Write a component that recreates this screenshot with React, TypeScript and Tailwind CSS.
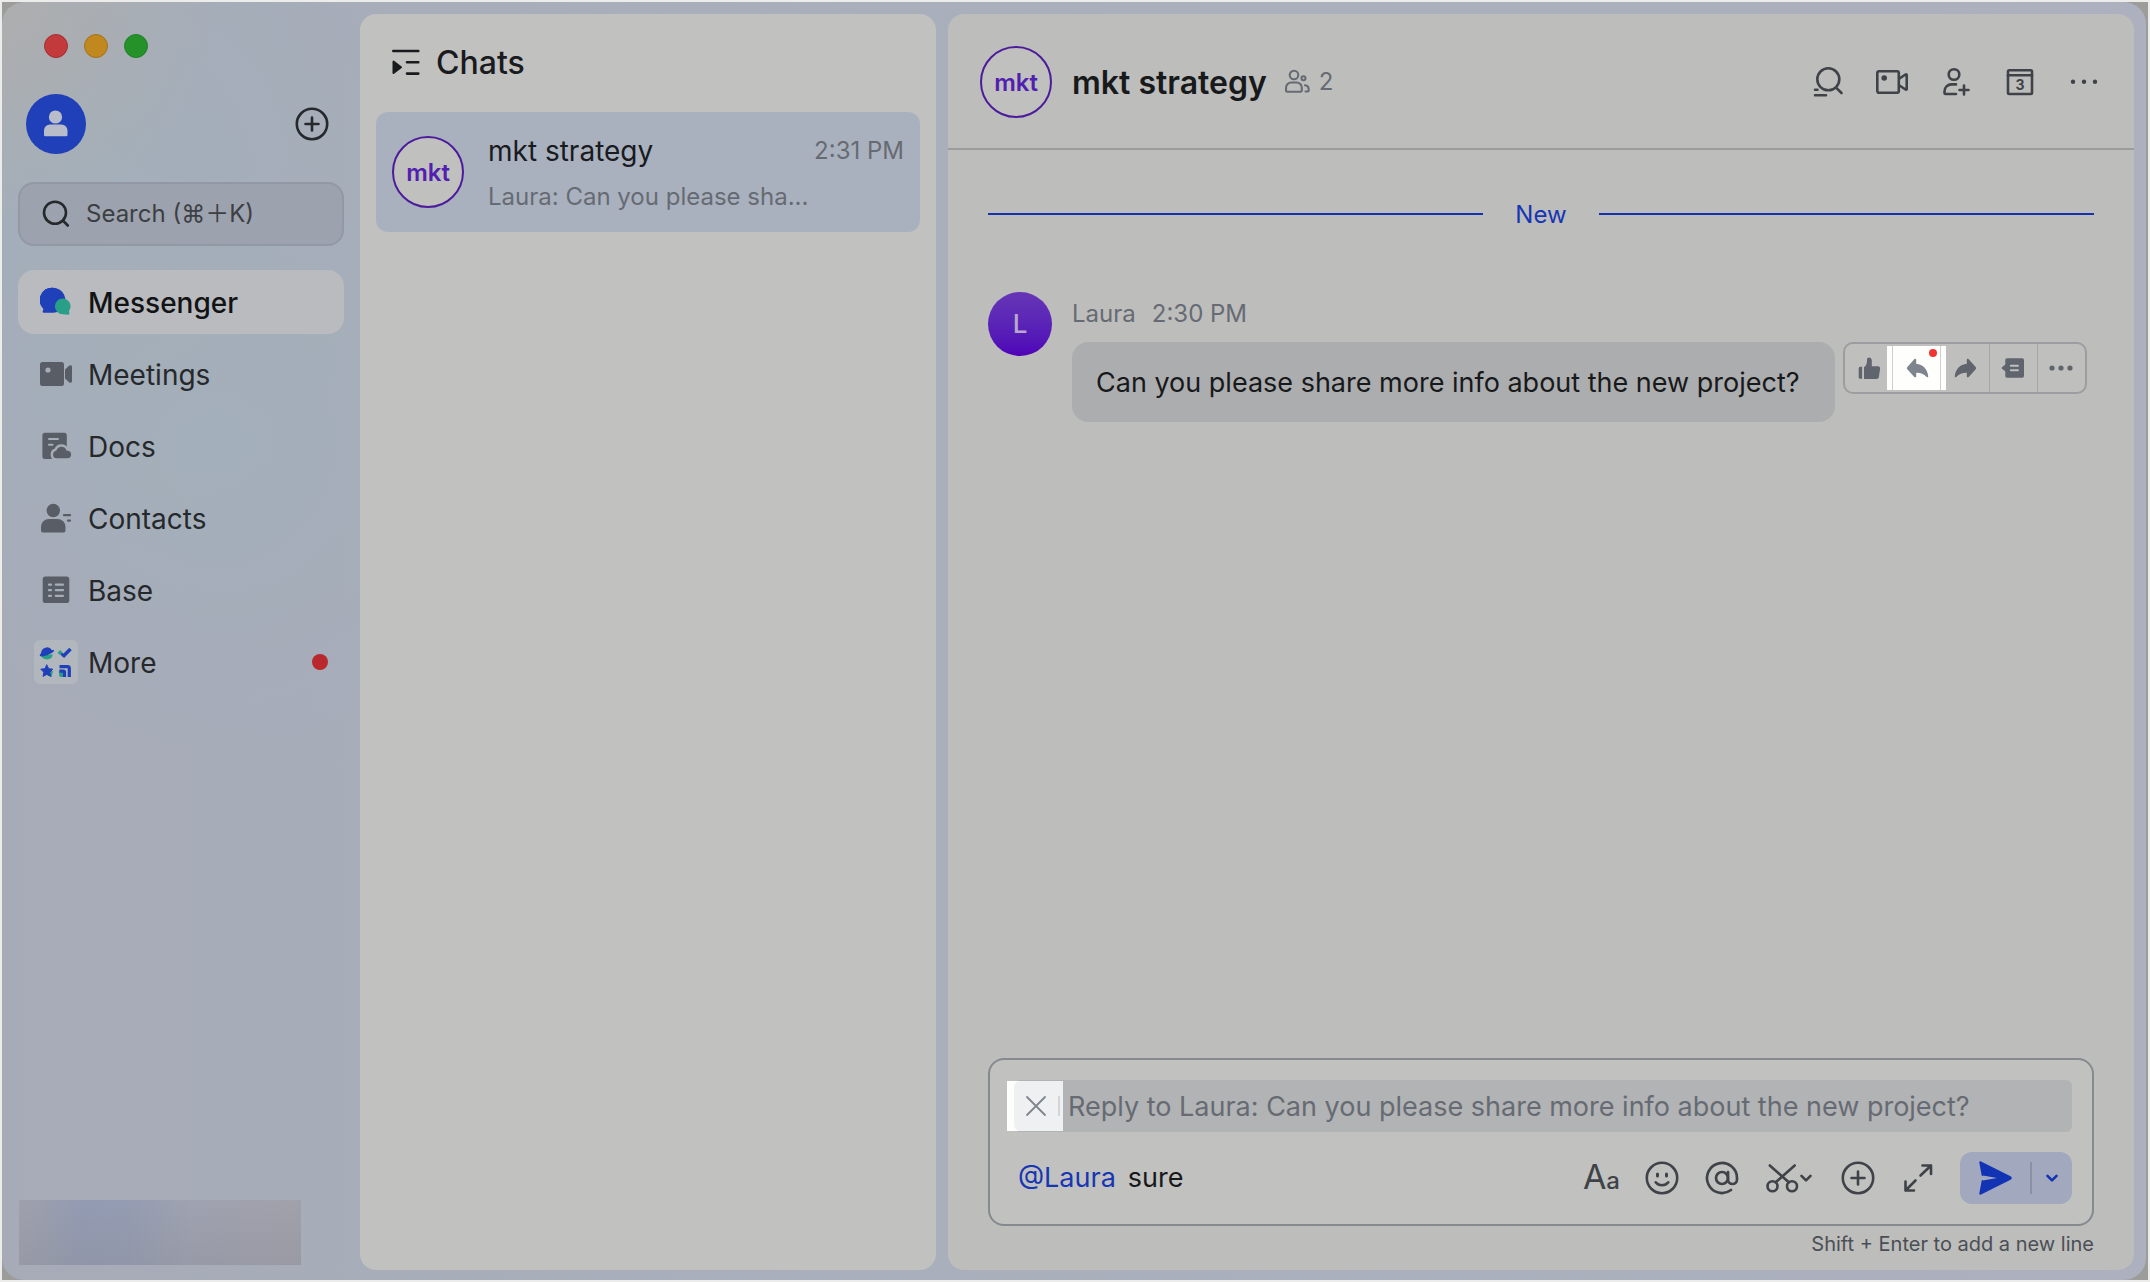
import type { ReactNode } from "react";
import { AtSign } from "lucide-react";

function Svg({ children, className = "size-8", box = 32 }: { children: ReactNode; className?: string; box?: number }) {
  return (
    <svg
      viewBox={`0 0 ${box} ${box}`}
      className={`${className} shrink-0`}
      fill="none"
      stroke="currentColor"
      strokeWidth="2.6"
      strokeLinecap="round"
      strokeLinejoin="round"
      aria-hidden="true"
    >
      {children}
    </svg>
  );
}

const MessengerIcon = () => (
  <Svg>
    <path d="M12.8 1.7a12 12 0 0 1 0 25H4a1.2 1.2 0 0 1-1.2-1.6l.6-2.2A12.400 12.400 0 0 1 12.800 1.700Z" fill="#1f40b8" stroke="none" />
    <path d="M12.800 1.700a12.200 12.200 0 0 0-9.400 20.600l9.400 2Z" fill="#1f40b8" stroke="none" />
    <path d="M22.8 12.4a7.9 7.9 0 0 0 0 15.8l5.4.5c.8 0 1.4-.6 1.2-1.4l-.4-2.4a7.9 7.9 0 0 0-6.2-12.5Z" fill="#2a9f88" stroke="none" />
  </Svg>
);
const MeetingsIcon = () => (
  <Svg>
    <g fill="currentColor" stroke="none">
      <path fillRule="evenodd" d="M2.5 4h19A2.5 2.5 0 0 1 24 6.5v19a2.5 2.5 0 0 1-2.5 2.5h-19A2.5 2.5 0 0 1 0 25.5v-19A2.5 2.5 0 0 1 2.5 4Zm5.500 5.400a2.6 2.6 0 1 0 0 5.200 2.6 2.6 0 0 0 0-5.200Z" />
      <path d="M25 11.5l4-3.8c1.2-1 3-.5 3 1v14.600c0 1.500-1.800 2-3 1l-4-3.800Z" />
    </g>
  </Svg>
);
const DocsIcon = () => (
  <Svg>
    <rect x="2.4" y="2.7" width="24.4" height="26.3" rx="2.5" fill="currentColor" stroke="none" />
    <path d="M9 9h9M9 14.7h3.500" stroke="#a5adb9" strokeWidth="2" />
    <path
      d="M16.5 29.5a5 5 0 0 1-1-9.8 6.3 6.3 0 0 1 11.8-.2 5 5 0 0 1 0 10Z"
      fill="currentColor"
      stroke="#a5adb9"
      strokeWidth="2.4"
    />
  </Svg>
);
const ContactsIcon = () => (
  <Svg>
    <g fill="currentColor" stroke="none">
      <circle cx="13.3" cy="8.5" r="6.7" />
      <path d="M9 17h8.500a8 8 0 0 1 8 8v3a2.600 2.600 0 0 1-2.600 2.600H3.600A2.600 2.600 0 0 1 1 28v-3a8 8 0 0 1 8-8Z" />
    </g>
    <path d="M24 13.200h6M28 18.600h2" strokeWidth="2.3" />
  </Svg>
);
const BaseIcon = () => (
  <Svg>
    <rect x="2.7" y="2.5" width="26.6" height="26.6" rx="2.8" fill="currentColor" stroke="none" />
    <path d="M9 10.700h2M15.800 10.700H23M9 16.200h2M15.800 16.200H23M9 21.800h2M15.800 21.800H23" stroke="#a5adb9" strokeWidth="2.3" />
  </Svg>
);
const MoreAppsIcon = () => (
  <span className="-mx-1.5 flex size-11 rounded-md bg-[#b2b6bd]">
    <Svg className="size-11" box={44}>
      <g stroke="none">
        <path d="M7 14.5a6 6 0 0 0 11.800 0Z" fill="#2a9f88" />
        <path d="M6 16c-.6-.9.300-2.200 1.100-2.800a5.900 5.900 0 0 1 10.900-3c1.500-.3 2.300 0 2 .9-.8 2.200-11.500 6.800-14 4.900Z" fill="#1f40b8" />
        <path d="M26.200 10l2.600 2.700-2.600 2.600-2.600-2.600Z" fill="#2a9f88" />
        <path d="M15 31h4l-1.500 6.300-4-2.300Z" fill="#2a9f88" />
        <path d="M12.800 25l1.900 3.700 4.100.5-3 3 .8 4.100-3.800-1.900-3.800 2 .8-4.200-3-3 4.100-.5Z" fill="#1f40b8" stroke="#1f40b8" strokeWidth="1" />
        <path d="M25 30h6v7h-4a2 2 0 0 1-2-2Z" fill="#2a9f88" />
      </g>
      <path d="M29 16.500l7.500-7.500" stroke="#1f40b8" strokeWidth="3.600" strokeLinecap="butt" />
      <path d="M28.300 14.500l1.500 1.500" stroke="#1f40b8" strokeWidth="2.800" />
      <path d="M25.500 26.600h8a1.800 1.800 0 0 1 1.800 1.800V37M25.500 31.200h3.800a1.200 1.200 0 0 1 1.200 1.200V37" stroke="#1f40b8" strokeWidth="3.200" strokeLinecap="butt" />
    </Svg>
  </span>
);
const SearchIcon = () => (
  <Svg>
    <circle cx="15" cy="14.7" r="11" />
    <path d="M23.300 23l4.500 4.500" />
  </Svg>
);
const PlusCircle = () => (
  <Svg className="size-9" box={36}>
    <circle cx="18" cy="18" r="15.2" />
    <path d="M18 11.500v13M11.500 18h13" />
  </Svg>
);
const Dots = ({ r }: { r: number }) => (
  <Svg>
    <g fill="currentColor" stroke="none">
      <circle cx="5" cy="15.700" r={r} />
      <circle cx="16" cy="15.700" r={r} />
      <circle cx="27" cy="15.700" r={r} />
    </g>
  </Svg>
);
const Chevron = () => (
  <Svg className="size-3" box={12}>
    <path d="M1.500 3.800L6 8.300l4.500-4.500" />
  </Svg>
);

const navItems = [
  { label: "Messenger", icon: <MessengerIcon />, active: true },
  { label: "Meetings", icon: <MeetingsIcon /> },
  { label: "Docs", icon: <DocsIcon /> },
  { label: "Contacts", icon: <ContactsIcon /> },
  { label: "Base", icon: <BaseIcon /> },
  { label: "More", icon: <MoreAppsIcon />, badge: true },
];

function Sidebar() {
  return (
    <aside className="flex w-[358px] shrink-0 flex-col px-4 pt-8 pb-[15px]">
      <div className="flex gap-4 pl-[26px]">
        <button aria-label="Close window" className="size-6 rounded-full border border-[#a52d30] bg-[#c33a3c]" />
        <button aria-label="Minimize window" className="size-6 rounded-full border border-[#a1741d] bg-[#c0881f]" />
        <button aria-label="Zoom window" className="size-6 rounded-full border border-[#22802a] bg-[#249228]" />
      </div>
      <div className="mt-9 flex items-center justify-between pr-[14px] pl-2">
        <button aria-label="Profile" className="flex size-[60px] items-center justify-center rounded-full bg-[#1f40b8] text-[#b9bdca]">
          <Svg>
            <g fill="currentColor" stroke="none">
              <circle cx="15.500" cy="9" r="6.600" />
              <path d="M10.500 16.500h11a6 6 0 0 1 6 6V27a1.200 1.200 0 0 1-1.200 1.200H5.200A1.200 1.200 0 0 1 4 27v-4.500a6 6 0 0 1 6.500-6Z" />
            </g>
          </Svg>
        </button>
        <button aria-label="Create" className="text-[#26292c]">
          <PlusCircle />
        </button>
      </div>
      <label className="mt-7 flex h-16 items-center gap-[14px] rounded-2xl border-2 border-[#9298a4] bg-[#9ca2ae] pl-5 text-[#26292c]">
        <SearchIcon />
        <input
          aria-label="Search"
          placeholder="Search (⌘＋K)"
          className="w-full min-w-0 bg-transparent text-2xl outline-none placeholder:text-[#3c3f43]"
        />
      </label>
      <nav className="mt-6 flex flex-col gap-2">
        {navItems.map((item) => (
          <a
            key={item.label}
            href="#"
            className={
              item.active
                ? "flex h-16 items-center gap-4 rounded-2xl bg-[#babbbe] px-[22px] text-[28px] font-medium text-[#111315]"
                : "flex h-16 items-center gap-4 rounded-2xl px-[22px] text-[28px] text-[#26292c]"
            }
          >
            <span className="flex text-[#595d65]">{item.icon}</span>
            <span className="flex-1 pt-0.5">{item.label}</span>
            {item.badge && <span className="mr-[-6px] size-4 rounded-full bg-[#b9282c]" />}
          </a>
        ))}
      </nav>
      <div className="mt-auto ml-px h-[65px] w-[282px] bg-[linear-gradient(90deg,#9fa1ac_0%,#939bb3_22%,#949cb3_38%,#9fa2b0_60%,#a1a1ab_100%)]">
        <div className="h-full bg-[linear-gradient(180deg,transparent,#8c8f9966)]" />
      </div>
    </aside>
  );
}

function GroupAvatar() {
  return (
    <span className="flex size-[72px] shrink-0 items-center justify-center rounded-full border-2 border-[#4c1c9c] bg-[#c0c0be] pt-0.5 text-2xl font-semibold text-[#5220b0]">
      mkt
    </span>
  );
}

function ChatList() {
  return (
    <section className="mt-3 mb-2.5 w-[576px] shrink-0 rounded-2xl bg-[#c1c1c0] px-4 text-[#191b1e]" aria-label="Chats">
      <div className="flex h-[98px] items-center gap-4 pl-4">
        <button aria-label="Toggle filters">
          <Svg className="size-7" box={28}>
            <path d="M1.300 2h25M15 13.300h11.300M15 24.600h11.300" />
            <path d="M1.500 12.500v11.500l7.500-5.800Z" fill="currentColor" strokeWidth="2" />
          </Svg>
        </button>
        <h2 className="text-[32px] font-medium">Chats</h2>
      </div>
      <a href="#" className="flex h-[120px] items-center gap-6 rounded-xl bg-[#aab1be] px-4">
        <GroupAvatar />
        <span className="flex min-w-0 flex-1 flex-col gap-2 pt-0.5">
          <span className="flex items-center justify-between">
            <span className="text-[28px] leading-10">mkt strategy</span>
            <span className="text-2xl text-[#666b73]">2:31 PM</span>
          </span>
          <span className="truncate text-2xl leading-9 text-[#666b73]">Laura: Can you please sha...</span>
        </span>
      </a>
    </section>
  );
}

function ConversationHeader() {
  return (
    <header className="flex h-[136px] items-center border-b-2 border-[#9c9c9c] px-8 pt-0.5">
      <GroupAvatar />
      <h1 className="ml-5 pt-0.5 text-[32px] font-semibold text-[#17191b]">mkt strategy</h1>
      <button className="ml-4 flex items-center gap-2 text-2xl text-[#666b73]" aria-label="2 members">
        <Svg className="size-7" box={28}>
          <g strokeWidth="2.100">
            <circle cx="11" cy="7" r="4.300" />
            <path d="M8.500 14.500h5a5.300 5.300 0 0 1 5.300 5.300v2.700a1.200 1.200 0 0 1-1.200 1.200H4.200A1.200 1.200 0 0 1 3 22.500v-2.700a5.300 5.300 0 0 1 5.500-5.300ZM22 17.300c2.300.3 3.700 1.900 3.700 4.200v1a1 1 0 0 1-1 1h-2.200" />
            <circle cx="20.500" cy="10.300" r="2" />
          </g>
        </Svg>
        <span>2</span>
      </button>
      <div className="ml-auto flex gap-8 pr-0.5 text-[#3f4348]">
        <button aria-label="Search in chat">
          <Svg>
            <circle cx="16.300" cy="13.300" r="11" />
            <path d="M24.300 21.800l5.200 5.200M3 23.700h2.500M3 29.300h11" />
          </Svg>
        </button>
        <button aria-label="Video meeting">
          <Svg>
            <rect x="1.300" y="5.200" width="21.500" height="21.500" rx="1.600" />
            <path d="M23.500 12.500l6-4c.600-.4 1.200-.1 1.200.6v13.800c0 .7-.6 1-1.200.6l-6-4" />
            <circle cx="8.200" cy="12" r="2.800" fill="currentColor" stroke="none" />
          </Svg>
        </button>
        <button aria-label="Add members">
          <Svg>
            <circle cx="14" cy="8.500" r="5.300" />
            <path d="M16 18.400h-4.500a7 7 0 0 0-7 7V27a1 1 0 0 0 1 1h10.500M24 19.500v9M19.500 24h9" />
          </Svg>
        </button>
        <button aria-label="Calendar">
          <Svg>
            <rect x="4" y="4.200" width="24" height="23.800" rx="1.200" />
            <path d="M4 9.300h24" />
            <text x="16" y="23.500" textAnchor="middle" fontSize="14" fontWeight="700" fill="currentColor" stroke="none">
              3
            </text>
          </Svg>
        </button>
        <button aria-label="More options">
          <Dots r={2.2} />
        </button>
      </div>
    </header>
  );
}

const replyShape = "M6.300 14.900 13.300 7.200c.7-.8 1.900-.4 1.900.7v3.800c6.700.6 11.200 5.300 12 12.300.1 1.300-.8 1.600-1.700.7-2.700-2.800-6-4-10.300-3.900v3.500c0 1.100-1.200 1.500-1.900.7L6.300 17.300a1.800 1.800 0 0 1 0-2.400Z";

function MessageActions() {
  return (
    <div className="flex h-[52px] rounded-[10px] border-2 border-[#9b9da1] bg-[#bfbfbe] text-[#60646c]">
      <button aria-label="Like" className="flex w-12 items-center justify-center">
        <Svg>
          <g fill="currentColor" stroke="none">
            <path d="M7.200 14.700h1.900v12H7.200a1.500 1.500 0 0 1-1.500-1.500v-9a1.500 1.500 0 0 1 1.500-1.500Z" />
            <path d="M11 15.300c1.800-1.300 3-3.600 3-6.300V7.500c0-2.900 4.800-2.900 4.800 1v5.800h6c1.700 0 2.500 1 2.300 2.500l-1.200 8c-.2 1.400-1 2.200-2.400 2.200H11Z" />
          </g>
        </Svg>
      </button>
      <button aria-label="Reply" className="relative flex w-12 items-center justify-center text-[#7f858f]">
        <span className="absolute inset-y-0.5 -left-1.5 w-[59px] border-x-[5px] border-[#fefefc] bg-[#fefefc]">
          <span className="block h-full border-x border-[#cfcfd0]" />
        </span>
        <span className="relative">
          <Svg>
            <path d={replyShape} fill="currentColor" stroke="none" />
          </Svg>
        </span>
        <span className="absolute top-[5px] right-1 size-2 rounded-full bg-[#f03432]" />
      </button>
      <button aria-label="Forward" className="flex w-12 items-center justify-center">
        <Svg>
          <path d={replyShape} fill="currentColor" stroke="none" transform="translate(33 0) scale(-1 1)" />
        </Svg>
      </button>
      <button aria-label="Reply in thread" className="flex w-12 items-center justify-center border-l border-[#a4a6a9]">
        <Svg>
          <path d="M10 6.300h15.300A1.700 1.700 0 0 1 27 8v16a1.700 1.700 0 0 1-1.700 1.700H10A1.700 1.700 0 0 1 8.300 24v-4.700L5 16.700a1 1 0 0 1 0-1.500l3.300-2.700V8A1.700 1.700 0 0 1 10 6.300Z" fill="currentColor" stroke="none" />
          <path d="M13.800 13.800H21M13.800 18.300H21" stroke="#bfbfbe" strokeWidth="2" />
        </Svg>
      </button>
      <button aria-label="More actions" className="flex w-12 items-center justify-center border-l border-[#a4a6a9]">
        <Svg>
          <g fill="currentColor" stroke="none">
            <circle cx="7" cy="16" r="2.600" />
            <circle cx="16" cy="16" r="2.600" />
            <circle cx="25" cy="16" r="2.600" />
          </g>
        </Svg>
      </button>
    </div>
  );
}

function Composer() {
  return (
    <div className="mx-10 mt-auto">
      <div className="flex h-[168px] flex-col justify-between rounded-2xl border-2 border-[#858a8f] bg-[#c1c1c0] py-5 pr-5 pl-6">
        <div className="flex h-[52px] items-center rounded-md bg-[#b2b3b4]">
          <div className="-ml-[7px] flex h-[50px] w-14 shrink-0 bg-[#fefefc] pl-[7px]">
            <div className="flex flex-1 items-center justify-between rounded-l-md bg-[#eff0f2] pr-[3px] pl-2 text-[#7f858f]">
              <button aria-label="Cancel reply">
                <Svg className="size-7" box={28}>
                  <path d="M5 5l18 18M23 5L5 23" strokeWidth="1.800" />
                </Svg>
              </button>
              <span className="h-5 w-0.5 bg-[#d3d5d8]" />
            </div>
          </div>
          <p className="ml-[5px] truncate pt-0.5 text-[27px] text-[#666b73]">
            Reply to Laura: Can you please share more info about the new project?
          </p>
        </div>
        <div className="flex h-[52px] items-center">
          <label htmlFor="message" className="pl-1 text-[27px] text-[#1636b4]">
            @Laura
          </label>
          <input
            id="message"
            defaultValue="sure"
            className="ml-3 min-w-0 flex-1 bg-transparent text-[27px] text-[#17191b] outline-none"
          />
          <div className="flex items-center gap-6 text-[#3f4348]">
            <button aria-label="Text formatting" className="flex items-baseline leading-9">
              <span className="text-[34px]">A</span>
              <span className="text-2xl font-medium">a</span>
            </button>
            <button aria-label="Emoji">
              <Svg className="size-9" box={36}>
                <circle cx="18" cy="18" r="15.200" />
                <path d="M13.500 14v2M22.500 14v2" strokeWidth="3" />
                <path d="M11.700 22.300c3 4 9.600 4 12.600 0" />
              </Svg>
            </button>
            <button aria-label="Mention">
              <AtSign className="size-9" strokeWidth={1.8} />
            </button>
            <button aria-label="Screenshot" className="mr-1 flex items-center">
              <Svg className="size-9" box={36}>
                <circle cx="8.500" cy="26.300" r="5" />
                <circle cx="28" cy="26.300" r="5" />
                <path d="M5.800 5.500l19 16.800M30.700 5.500l-19 16.800" />
              </Svg>
              <Chevron />
            </button>
            <button aria-label="Attach">
              <PlusCircle />
            </button>
            <button aria-label="Expand">
              <Svg className="size-9" box={36}>
                <path d="M22.500 5.500h8.500V14M31 5.500L20.500 15.500M5.500 21.500V30.500H14M5.500 30.500L15.500 20.500" />
              </Svg>
            </button>
            <div className="flex h-[52px] items-center rounded-xl bg-[#a2a8bd] text-[#1233b4]">
              <button aria-label="Send" className="flex w-[70px] items-center justify-center">
                <Svg className="size-9" box={36}>
                  <path d="M3.500 2.500 33 17.300c.8.400.8 1 0 1.400L3.500 33.500l2.300-12.300L20 18 5.800 14.800Z" fill="currentColor" strokeWidth="2.400" />
                  <path d="M6 15.600 20 18 6 20.400Z" fill="#a2a8bd" stroke="none" />
                </Svg>
              </button>
              <span className="h-8 w-0.5 bg-[#8a90aa]" />
              <button aria-label="Send options" className="flex w-10 items-center justify-center">
                <Chevron />
              </button>
            </div>
          </div>
        </div>
      </div>
      <p className="flex h-9 items-center justify-end text-xl text-[#4b4f55]">Shift + Enter to add a new line</p>
    </div>
  );
}

function Conversation() {
  return (
    <main className="mx-3 mt-3 mb-2.5 flex min-w-0 flex-1 flex-col rounded-2xl bg-[#bdbdbc] pb-2">
      <ConversationHeader />
      <div className="mx-10 mt-11 flex h-10 items-center gap-8 text-2xl text-[#1636b4]">
        <span className="h-0.5 flex-1 bg-[#1432b0]" />
        <span className="pt-0.5">New</span>
        <span className="h-0.5 flex-1 bg-[#1432b0]" />
      </div>
      <article className="mx-10 mt-14 flex gap-5">
        <span className="mt-0.5 flex size-16 shrink-0 items-center justify-center rounded-full bg-linear-to-b from-[#6635b5] to-[#4f00b8] text-[26px] leading-none font-medium text-[#b9a8cc]">
          L
        </span>
        <div>
          <p className="flex h-[52px] gap-4 pt-1.5 text-2xl leading-9 text-[#666b73]">
            <span>Laura</span>
            <span>2:30 PM</span>
          </p>
          <div className="flex gap-2">
            <p className="flex h-20 items-center rounded-2xl bg-[#acadae] pt-0.5 pr-[35px] pl-6 text-[27px] text-[#17191b]">
              Can you please share more info about the new project?
            </p>
            <MessageActions />
          </div>
        </div>
      </article>
      <Composer />
    </main>
  );
}

export default function App() {
  return (
    <div className="flex min-h-screen border-2 border-[#ececea] bg-[#9c9c9b] pr-0.5 font-['Inter','DejaVu_Sans','Noto_Sans_CJK_SC',sans-serif]">
      <div className="flex min-w-0 flex-1 rounded-[22px] bg-[radial-gradient(circle_at_0%_0%,#adaeae_0,transparent_220px),radial-gradient(circle_at_10%_35%,#a3afba_0,transparent_300px),radial-gradient(circle_at_4%_14%,#a3afba_0,transparent_420px),linear-gradient(90deg,#a7abb8,#a9b0bc_50%,#adb0be)]">
        <Sidebar />
        <ChatList />
        <Conversation />
      </div>
    </div>
  );
}
